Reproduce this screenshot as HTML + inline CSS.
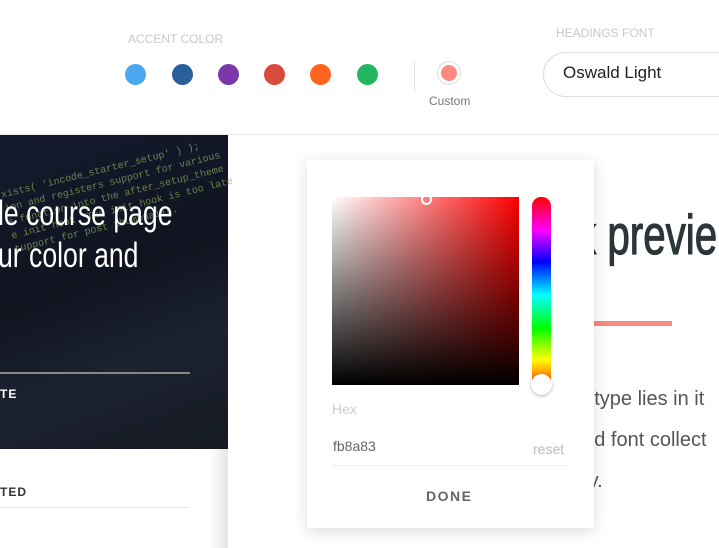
<!DOCTYPE html>
<html><head><style>
body{margin:0;width:719px;height:548px;overflow:hidden;background:#fff;font-family:"Liberation Sans",sans-serif;position:relative}
.a{position:absolute}
.dot{position:absolute;top:64px;width:21px;height:21px;border-radius:50%}
</style></head><body>
<div class="a" style="left:128px;top:32px;font-size:12px;color:#c8c8c8">ACCENT COLOR</div>
<div class="dot" style="left:125px;background:#4aa8f0"></div>
<div class="dot" style="left:172px;background:#2a5f9e"></div>
<div class="dot" style="left:218px;background:#7a38a8"></div>
<div class="dot" style="left:264px;background:#d84a3c"></div>
<div class="dot" style="left:310px;background:#fe6420"></div>
<div class="dot" style="left:357px;background:#22b663"></div>
<div class="a" style="left:414px;top:60px;width:1px;height:31px;background:#e6e6e6"></div>
<div class="a" style="left:437px;top:61px;width:22px;height:22px;border:1px solid #ddd;border-radius:50%;background:#fff"></div>
<div class="a" style="left:441px;top:65px;width:16px;height:16px;border-radius:50%;background:#fb8a83"></div>
<div class="a" style="left:429px;top:94px;font-size:12px;color:#777">Custom</div>
<div class="a" style="left:556px;top:26px;font-size:12px;color:#c8c8c8">HEADINGS FONT</div>
<div class="a" style="left:543px;top:52px;width:200px;height:43px;border:1px solid #ddd;border-radius:23px"></div>
<div class="a" style="left:563px;top:63px;font-size:17px;color:#222">Oswald Light</div>
<div class="a" style="left:0;top:134px;width:719px;height:1px;background:#ebebeb"></div>

<div class="a" style="left:0;top:135px;width:228px;height:314px;background:linear-gradient(160deg,#141a2e 0%,#10141f 45%,#1c2230 70%,#151a22 100%)"></div>
<div class="a" style="left:0;top:190px;width:228px;height:160px;color:#8fb060;font-family:'Liberation Mono',monospace;font-size:10px;opacity:.7;transform:rotate(-14deg);transform-origin:0 0;line-height:14px;white-space:nowrap">xists( 'incode_starter_setup' ) );<br>ion and registers support for various<br>s function into the after_setup_theme<br>e init hook. The init hook is too late<br>tupport for post thumbnails.</div>
<div class="a" style="left:-2px;top:193px;font-size:35px;color:#fff;line-height:42px;transform:scaleX(.76);transform-origin:0 0;white-space:nowrap">le course page<br>ur color and</div>
<div class="a" style="left:0;top:372px;width:190px;height:2px;background:#888"></div>
<div class="a" style="left:0;top:387px;font-size:12px;font-weight:bold;color:#fff;letter-spacing:1px">TE</div>
<div class="a" style="left:210px;top:449px;width:18px;height:99px;background:linear-gradient(90deg,#fff,#e4e4e4)"></div>
<div class="a" style="left:0;top:485px;font-size:12px;font-weight:bold;color:#333;letter-spacing:1px">TED</div>
<div class="a" style="left:0;top:507px;width:190px;height:1px;background:#e6e6e6"></div>

<div class="a" style="left:576px;top:202px;font-size:56px;color:#2c3539;transform:scaleX(.72);transform-origin:0 0;white-space:nowrap;-webkit-text-stroke:1.2px #2c3539">k previe</div>
<div class="a" style="left:594px;top:321px;width:78px;height:5px;background:#fb8a83"></div>
<div class="a" style="left:572px;top:379px;font-size:20px;color:#555;line-height:41px;white-space:nowrap">of type lies in it<br>ood font collect<br>rity.</div>

<div class="a" style="left:307px;top:160px;width:287px;height:368px;background:#fff;box-shadow:0 3px 14px rgba(0,0,0,.15)"></div>
<div class="a" style="left:332px;top:197px;width:187px;height:188px;background:linear-gradient(to bottom,transparent,#000),linear-gradient(to right,#fff,#f00)"></div>
<div class="a" style="left:421px;top:194px;width:7px;height:7px;border:2px solid #fff;border-radius:50%"></div>
<div class="a" style="left:532px;top:197px;width:19px;height:196px;border-radius:9px;background:linear-gradient(#f00 0%,#f0f 17%,#00f 33%,#0ff 50%,#0f0 67%,#ff0 83%,#f00 100%)"></div>
<div class="a" style="left:531px;top:374px;width:21px;height:21px;border-radius:50%;background:#fff;box-shadow:0 1px 3px rgba(0,0,0,.3)"></div>
<div class="a" style="left:332px;top:401px;font-size:14px;color:#ccc">Hex</div>
<div class="a" style="left:333px;top:438px;font-size:14px;color:#666">fb8a83</div>
<div class="a" style="left:533px;top:441px;font-size:14px;color:#bbb">reset</div>
<div class="a" style="left:332px;top:465px;width:237px;height:1px;background:#eee"></div>
<div class="a" style="left:426px;top:488px;font-size:14px;font-weight:bold;color:#666;letter-spacing:1.5px">DONE</div>
</body></html>
